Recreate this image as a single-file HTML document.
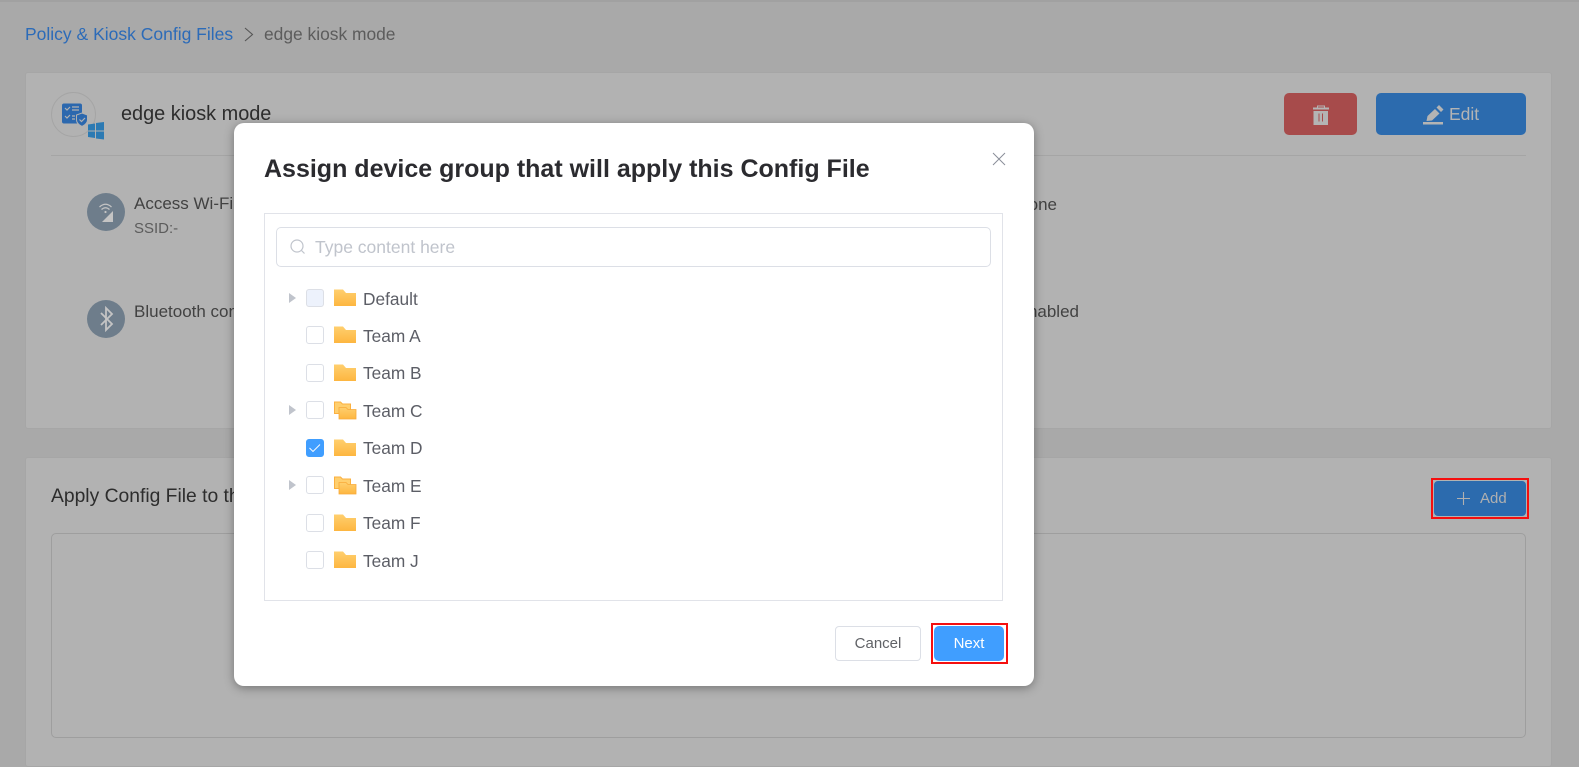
<!DOCTYPE html>
<html><head><meta charset="utf-8"><style>
*{box-sizing:border-box}
html,body{margin:0;padding:0;width:1579px;height:756px;overflow:hidden;background:#a9a9a9;font-family:"Liberation Sans",sans-serif}
.a{position:absolute;white-space:nowrap}
.card{position:absolute;background:#b2b2b2;border:1px solid #a6a6a6;border-radius:3px}
.cb{position:absolute;left:306px;width:18px;height:18px;border:1px solid #dcdfe6;border-radius:3px;background:#fff}
.lab{position:absolute;left:363px;font-size:17.3px;line-height:20px;color:#5c5e66;white-space:nowrap}
.fold{position:absolute;left:333px}
.tri{position:absolute;left:289px;width:0;height:0;border-left:7px solid #c0c4cc;border-top:5px solid transparent;border-bottom:5px solid transparent}
</style></head><body>
<div class="a" style="left:0;top:0;width:1579px;height:2px;background:#a1a1a1"></div>
<div class="a" style="left:25px;top:24px;font-size:17.5px;line-height:20px;color:#2c6bb8">Policy &amp; Kiosk Config Files</div>
<svg class="a" style="left:243px;top:27px" width="12" height="16"><path d="M2 1L9.500 7.500L2 14" fill="none" stroke="#555" stroke-width="1.100"/></svg>
<div class="a" style="left:264px;top:24px;font-size:17.4px;line-height:20px;color:#5c5c5c">edge kiosk mode</div>

<div class="card" style="left:25px;top:72px;width:1527px;height:357px"></div>
<div class="a" style="left:51px;top:92px;width:45px;height:45px;border:1px solid #a5a5a5;border-radius:50%"></div>
<svg class="a" style="left:60px;top:102px" width="46" height="38">
<rect x="2" y="1.500" width="20" height="20" rx="2" fill="#2c68ae"/>
<path d="M5 6l2 2 3-3M5 14l2 2 3-3" stroke="#b2b2b2" stroke-width="1.200" fill="none"/>
<path d="M12 5h7M12 8h7M12 14h3M12 17h3" stroke="#b2b2b2" stroke-width="1.200"/>
<path d="M22 11l5.500 2v5c0 3-2.500 5-5.500 6.500c-3-1.500-5.500-3.500-5.500-6.500v-5z" fill="#2c68ae" stroke="#b2b2b2"/>
<path d="M19.500 17.500l2 2 3.500-3.500" stroke="#b2b2b2" stroke-width="1.200" fill="none"/>
<path d="M28 22.500L35 21.500V28.500H28ZM36 21L44 20V28.500H36ZM28 29.500H35V36L28 35ZM36 29.500H44V37.500L36 36.500Z" fill="#2c7ab3"/>
</svg>
<div class="a" style="left:121px;top:103px;font-size:19.900px;line-height:22px;color:#2d2d2d">edge kiosk mode</div>

<div class="a" style="left:1284px;top:93px;width:73px;height:42px;background:#a74b4b;border-radius:5px"></div>
<svg class="a" style="left:1312px;top:104px" width="18" height="22"><path d="M1 3.500h16v2H1zM5 3.500V1.500h8v2h-1V2.500H6v1z" fill="#b4b4b4"/><path d="M1.500 7h14.500v14H1.500z" fill="#b4b4b4"/><path d="M7 9.500v8M10.500 9.500v8" stroke="#a74b4b" stroke-width="1"/></svg>
<div class="a" style="left:1376px;top:93px;width:150px;height:42px;background:#2c6bae;border-radius:5px"></div>
<svg class="a" style="left:1422px;top:104px" width="23" height="22"><path d="M4.500 17L5.500 12L13 5L17.500 9.500L10 16.500ZM14.500 3.500L17 1L21.500 5.500L19 8Z" fill="#b4b4b4"/><rect x="1" y="18" width="20" height="2.500" fill="#b4b4b4"/></svg>
<div class="a" style="left:1449px;top:103px;font-size:17.500px;line-height:22px;color:#b4b4b4">Edit</div>
<div class="a" style="left:51px;top:155px;width:1475px;height:1px;background:#a5a5a5"></div>

<div class="a" style="left:87px;top:193px;width:38px;height:38px;border-radius:50%;background:#6e7d8b"></div>
<svg class="a" style="left:96px;top:200px" width="20" height="25"><path d="M17 11v11H6z" fill="#c4c4c4"/><path d="M3.500 7Q9.500 1.500 15.500 7M5.500 9.500Q9.500 6 13.500 9.500" fill="none" stroke="#c4c4c4" stroke-width="1.300"/><circle cx="9.500" cy="12" r="1.100" fill="#c4c4c4"/></svg>
<div class="a" style="left:134px;top:194px;font-size:17px;line-height:20px;color:#424242">Access Wi-Fi</div>
<div class="a" style="left:134px;top:220px;font-size:15px;line-height:18px;color:#5c5c5c">SSID:-</div>
<div class="a" style="left:87px;top:300px;width:38px;height:38px;border-radius:50%;background:#6e7d8b"></div>
<svg class="a" style="left:98px;top:306px" width="18" height="26"><path d="M3 7L14 18L8 24V2L14 8L3 19" fill="none" stroke="#c4c4c4" stroke-width="1.800"/></svg>
<div class="a" style="left:134px;top:302px;font-size:17px;line-height:20px;color:#424242">Bluetooth configuration</div>
<div class="a" style="left:1000px;top:195px;width:57px;text-align:right;font-size:17px;line-height:20px;color:#424242">None</div>
<div class="a" style="left:980px;top:302px;width:99px;text-align:right;font-size:17px;line-height:20px;color:#424242">Enabled</div>

<div class="card" style="left:25px;top:457px;width:1527px;height:310px"></div>
<div class="a" style="left:51px;top:486px;font-size:19.300px;line-height:22px;color:#2d2d2d">Apply Config File to the device group</div>
<div class="a" style="left:1431px;top:478px;width:98px;height:41px;border:2px solid #f50f0f"></div>
<div class="a" style="left:1434px;top:481px;width:92px;height:35px;background:#2c6bae;border-radius:4px"></div>
<svg class="a" style="left:1456px;top:491px" width="15" height="15"><path d="M7.500 1v13M1 7.500h13" stroke="#b0b0b0" stroke-width="1.100"/></svg>
<div class="a" style="left:1480px;top:489px;font-size:15px;line-height:20px;color:#b0b0b0">Add</div>
<div class="a" style="left:51px;top:533px;width:1475px;height:205px;border:1px solid #9e9e9e;border-radius:5px"></div>

<!-- modal -->
<div class="a" style="left:234px;top:123px;width:800px;height:563px;background:#fff;border-radius:10px;box-shadow:0 2px 10px rgba(0,0,0,.35)"></div>
<div class="a" style="left:264px;top:154px;font-size:25px;line-height:30px;font-weight:bold;color:#2b2b2f">Assign device group that will apply this Config File</div>
<svg class="a" style="left:992px;top:152px" width="14" height="14"><path d="M1 1l12 12M13 1L1 13" stroke="#8a8f99" stroke-width="1"/></svg>
<div class="a" style="left:264px;top:213px;width:739px;height:388px;border:1px solid #e1e3e9"></div>
<div class="a" style="left:276px;top:227px;width:715px;height:40px;border:1px solid #dcdfe6;border-radius:5px"></div>
<svg class="a" style="left:290px;top:239px" width="16" height="17"><circle cx="7" cy="7" r="6" fill="none" stroke="#c0c4cc" stroke-width="1.200"/><path d="M11.500 11.500l3 3" stroke="#c0c4cc" stroke-width="1.200"/></svg>
<div class="a" style="left:315px;top:237px;font-size:17.500px;line-height:20px;color:#c0c4cc">Type content here</div>

<svg width="0" height="0" style="position:absolute"><defs>
<linearGradient id="g" x1="0" y1="0" x2="0" y2="1"><stop offset="0" stop-color="#ffcf6e"/><stop offset="1" stop-color="#fdb640"/></linearGradient>
</defs></svg>

<div class="tri" style="top:293px"></div>
<div class="cb" style="top:289px;background:#edf2fc"></div>
<svg class="fold" style="top:289px" width="24" height="18"><path d="M1 17V.500h9l3 3.500h10v13z" fill="url(#g)"/></svg>
<div class="lab" style="top:289px">Default</div>

<div class="cb" style="top:326px"></div>
<svg class="fold" style="top:326px" width="24" height="18"><path d="M1 17V.500h9l3 3.500h10v13z" fill="url(#g)"/></svg>
<div class="lab" style="top:326px">Team A</div>

<div class="cb" style="top:364px"></div>
<svg class="fold" style="top:364px" width="24" height="18"><path d="M1 17V.500h9l3 3.500h10v13z" fill="url(#g)"/></svg>
<div class="lab" style="top:363px">Team B</div>

<div class="tri" style="top:405px"></div>
<div class="cb" style="top:401px"></div>
<svg class="fold" style="top:401px" width="24" height="19"><path d="M1.500 12.500V1h6l2 2h8v9.500z" fill="#ffcf6e" stroke="#fbb040" stroke-width="1"/><path d="M6 18V6.500h7l2 2h8V18z" fill="url(#g)" stroke="#f9ab3a" stroke-width=".8"/></svg>
<div class="lab" style="top:401px">Team C</div>

<div class="cb" style="top:439px;background:#409eff;border-color:#409eff"></div>
<svg class="a" style="left:306px;top:439px" width="18" height="18"><path d="M3.500 9l3.500 3.500 7-7" fill="none" stroke="#fff" stroke-width=".9"/></svg>
<svg class="fold" style="top:439px" width="24" height="18"><path d="M1 17V.500h9l3 3.500h10v13z" fill="url(#g)"/></svg>
<div class="lab" style="top:438px">Team D</div>

<div class="tri" style="top:480px"></div>
<div class="cb" style="top:476px"></div>
<svg class="fold" style="top:476px" width="24" height="19"><path d="M1.500 12.500V1h6l2 2h8v9.500z" fill="#ffcf6e" stroke="#fbb040" stroke-width="1"/><path d="M6 18V6.500h7l2 2h8V18z" fill="url(#g)" stroke="#f9ab3a" stroke-width=".8"/></svg>
<div class="lab" style="top:476px">Team E</div>

<div class="cb" style="top:514px"></div>
<svg class="fold" style="top:514px" width="24" height="18"><path d="M1 17V.500h9l3 3.500h10v13z" fill="url(#g)"/></svg>
<div class="lab" style="top:513px">Team F</div>

<div class="cb" style="top:551px"></div>
<svg class="fold" style="top:551px" width="24" height="18"><path d="M1 17V.500h9l3 3.500h10v13z" fill="url(#g)"/></svg>
<div class="lab" style="top:551px">Team J</div>

<div class="a" style="left:835px;top:626px;width:86px;height:35px;border:1px solid #dcdfe6;border-radius:4px;text-align:center;font-size:15px;line-height:34px;color:#606266">Cancel</div>
<div class="a" style="left:931px;top:623px;width:77px;height:41px;border:2px solid #f50f0f"></div>
<div class="a" style="left:934px;top:626px;width:70px;height:35px;background:#409eff;border-radius:5px;text-align:center;font-size:15px;line-height:36px;color:#fff">Next</div>
</body></html>
